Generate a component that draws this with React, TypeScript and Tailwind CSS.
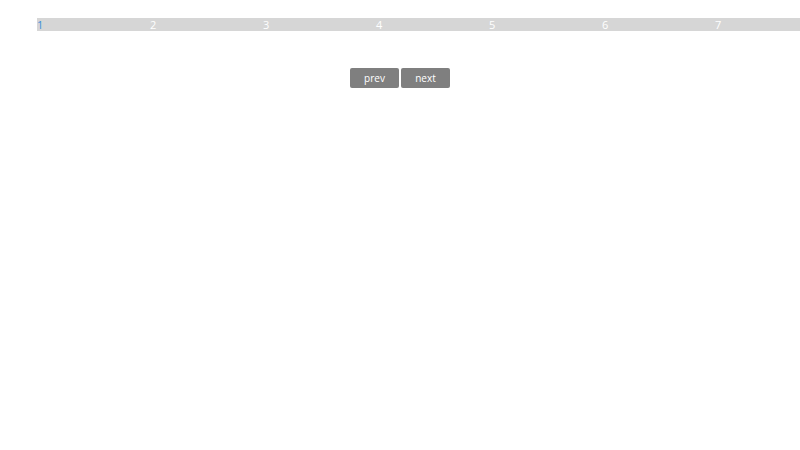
export default function App() {
  const pages = [1, 2, 3, 4, 5, 6, 7];
  const current = 1;
  return (
    <div className="w-[800px] h-[450px] overflow-hidden bg-white font-['Open_Sans',sans-serif]">
      <div className="pt-[18px] pl-[37px]">
        <div className="flex w-[791px] h-[13px] bg-[#d6d6d6]">
          {pages.map((p) => (
            <div
              key={p}
              className={`w-[113px] shrink-0 text-[11px] leading-[13px] ${
                p === current ? "text-[#3b8fd9]" : "text-white"
              }`}
            >
              {p}
            </div>
          ))}
        </div>
      </div>
      <div className="flex justify-center gap-[2px] mt-[37px]">
        <button
          type="button"
          className="w-[49px] h-[20px] rounded-[2px] bg-[#7f7f7f] text-white text-[10px] leading-[20px]"
        >
          prev
        </button>
        <button
          type="button"
          className="w-[49px] h-[20px] rounded-[2px] bg-[#7f7f7f] text-white text-[10px] leading-[20px]"
        >
          next
        </button>
      </div>
    </div>
  );
}
